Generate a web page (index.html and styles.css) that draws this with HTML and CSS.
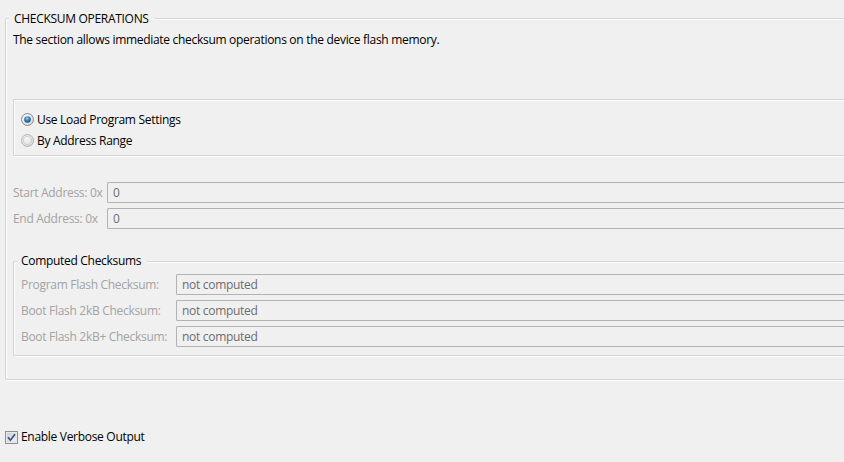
FILE: index.html
```html
<!DOCTYPE html>
<html>
<head>
<meta charset="utf-8">
<link rel="stylesheet" href="styles.css">
</head>
<body>
<div class="group section">
  <div class="group-title">CHECKSUM OPERATIONS</div>
  <p class="desc">The section allows immediate checksum operations on the device flash memory.</p>
  <div class="radio-box">
    <div class="radio-row">
      <svg class="radio" width="13" height="13" viewBox="0 0 13 13">
        <defs>
          <radialGradient id="rf" cx="0.4" cy="0.35" r="0.7">
            <stop offset="0" stop-color="#ffffff"/>
            <stop offset="1" stop-color="#d6d6d6"/>
          </radialGradient>
          <radialGradient id="dot" cx="0.45" cy="0.35" r="0.6">
            <stop offset="0" stop-color="#8fd0f5"/>
            <stop offset="0.6" stop-color="#2b7fb8"/>
            <stop offset="1" stop-color="#1a4f7c"/>
          </radialGradient>
          <radialGradient id="rd" cx="0.4" cy="0.35" r="0.7">
            <stop offset="0" stop-color="#f8f8f8"/>
            <stop offset="1" stop-color="#dadada"/>
          </radialGradient>
        </defs>
        <circle cx="6.5" cy="6.5" r="6" fill="url(#rf)" stroke="#8a8a8a" stroke-width="1"/>
        <circle cx="6.5" cy="6.5" r="3.3" fill="url(#dot)"/>
      </svg>
      <span class="radio-label">Use Load Program Settings</span>
    </div>
    <div class="radio-row">
      <svg class="radio" width="13" height="13" viewBox="0 0 13 13">
        <circle cx="6.5" cy="6.5" r="6" fill="url(#rd)" stroke="#b4b4b4" stroke-width="1"/>
        <circle cx="6.5" cy="6.5" r="4.2" fill="none" stroke="#cfcfcf" stroke-width="1"/>
      </svg>
      <span class="radio-label">By Address Range</span>
    </div>
  </div>
  <div class="field-grid address">
    <span class="field-label">Start Address: 0x</span>
    <div class="field">0</div>
    <span class="field-label">End Address: 0x</span>
    <div class="field">0</div>
  </div>
  <div class="group computed">
    <div class="group-title sub">Computed Checksums</div>
    <div class="field-grid sums">
      <span class="field-label">Program Flash Checksum:</span>
      <div class="field">not computed</div>
      <span class="field-label">Boot Flash 2kB Checksum:</span>
      <div class="field">not computed</div>
      <span class="field-label">Boot Flash 2kB+ Checksum:</span>
      <div class="field">not computed</div>
    </div>
  </div>
</div>
<div class="check-row">
  <svg class="checkbox" width="13" height="13" viewBox="0 0 13 13">
    <defs>
      <linearGradient id="cb" x1="0" y1="0" x2="1" y2="1">
        <stop offset="0" stop-color="#cbcfd5"/>
        <stop offset="1" stop-color="#f6f6f6"/>
      </linearGradient>
    </defs>
    <rect x="0.5" y="0.5" width="12" height="12" fill="#f4f4f4" stroke="#8e8f8f"/>
    <rect x="2" y="2" width="9" height="9" fill="url(#cb)" stroke="#c9ccd2" stroke-width="0.5"/>
    <path d="M3 6.3 L5.4 9.2 L10 3.2" fill="none" stroke="#3c5183" stroke-width="1.7"/>
  </svg>
  <span class="check-label">Enable Verbose Output</span>
</div>
</body>
</html>
```

FILE: styles.css
```css
html, body {
  margin: 0;
  padding: 0;
}
body {
  background: #f0f0f0;
  font-family: "Open Sans", "Noto Sans", sans-serif;
  font-size: 12px;
  letter-spacing: -0.3px;
  line-height: 16px;
  color: #000;
  overflow: hidden;
  width: 844px;
  height: 462px;
}
.group {
  border: 1px solid #d5d5d5;
  box-shadow: inset 1px 1px 0 #ffffff, 1px 1px 0 #ffffff;
  border-radius: 2px;
}
.section {
  margin: 18px -4px 0 5px;
  padding: 0 0 23px 7px;
}
.group-title {
  width: fit-content;
  margin: -8px 0 0 -4px;
  padding: 0 6px 0 5px;
  background: #f0f0f0;
  white-space: nowrap;
}
.desc {
  margin: 5px 0 0 0;
  white-space: nowrap;
}
.radio-box {
  margin-top: 51px;
  border: 1px solid #d5d5d5;
  border-right: 0;
  box-shadow: inset 1px 1px 0 #ffffff, 0 1px 0 #ffffff;
  padding: 9px 0 4px 7px;
}
.radio-row {
  display: flex;
  align-items: center;
  height: 21px;
  gap: 3px;
}
.radio {
  display: block;
  flex: none;
}
.field-grid {
  display: grid;
  grid-template-columns: 94px 1fr;
  grid-auto-rows: 21px;
  row-gap: 5px;
  align-items: center;
}
.address {
  margin-top: 26px;
}
.field-label {
  color: #a3a3a3;
  white-space: nowrap;
}
.field {
  height: 21px;
  box-sizing: border-box;
  border: 1px solid #b2b2b2;
  border-right: 0;
  border-radius: 2px 0 0 2px;
  background: #f0f0f0;
  color: #6d6d6d;
  padding: 0 0 0 5px;
  line-height: 19px;
  white-space: nowrap;
}
.computed {
  margin-top: 32px;
  padding: 0 0 8px 7px;
  border-right: 0;
}
.group-title.sub {
  margin-top: -9px;
  padding-left: 4px;
}
.sums {
  margin-top: 5px;
  grid-template-columns: 155px 1fr;
}
.check-row {
  margin: 49px 0 0 5px;
  display: flex;
  align-items: center;
  height: 16px;
  gap: 3px;
}
.checkbox {
  display: block;
  flex: none;
}
```
